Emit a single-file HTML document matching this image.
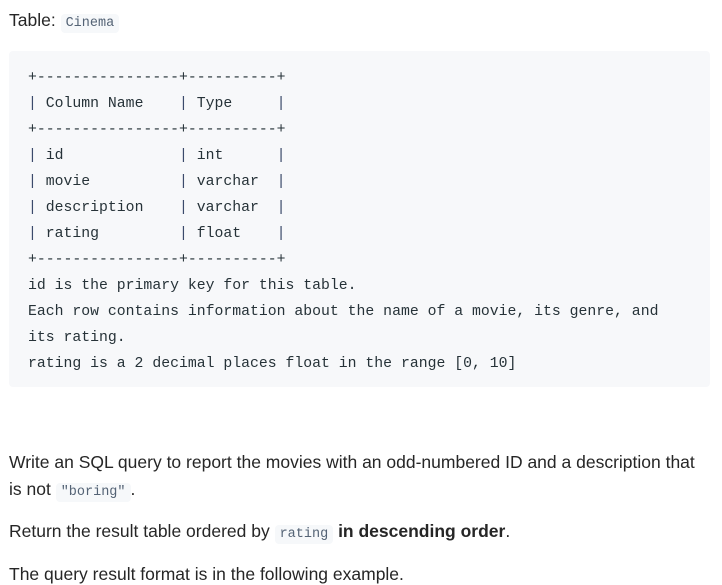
<!DOCTYPE html>
<html><head><style>
body{margin:0;background:#fff;font-family:"Liberation Sans",sans-serif;color:#262626;font-size:17.5px;width:722px;height:576px;overflow:hidden;position:relative}
.t{position:absolute;left:9px;white-space:nowrap}
code{font-family:"Liberation Mono",monospace;font-size:13.5px;background:#f6f8fa;color:#546375;padding:2px 5px;border-radius:4px}
pre{position:absolute;left:9px;top:51px;width:701px;height:336px;margin:0;background:#f7f8fa;border-radius:4px;box-sizing:border-box;padding:14px 0 0 19px;font-family:"Liberation Mono",monospace;font-size:14.8px;line-height:26px;color:#263238}
.p{color:#3b4a6b}
</style></head><body>
<div class="t" style="top:10px">Table: <code>Cinema</code></div>
<pre>+----------------+----------+
<span class="p">|</span> Column Name    <span class="p">|</span> Type     <span class="p">|</span>
+----------------+----------+
<span class="p">|</span> id             <span class="p">|</span> int      <span class="p">|</span>
<span class="p">|</span> movie          <span class="p">|</span> varchar  <span class="p">|</span>
<span class="p">|</span> description    <span class="p">|</span> varchar  <span class="p">|</span>
<span class="p">|</span> rating         <span class="p">|</span> float    <span class="p">|</span>
+----------------+----------+
id is the primary key for this table.
Each row contains information about the name of a movie, its genre, and
its rating.
rating is a 2 decimal places float in the range [0, 10]</pre>
<div class="t" style="top:449px;line-height:27px;white-space:normal;width:710px">Write an SQL query to report the movies with an odd-numbered ID and a description that<br>is not <code>"boring"</code>.</div>
<div class="t" style="top:521px">Return the result table ordered by <code>rating</code> <b>in descending order</b>.</div>
<div class="t" style="top:564px">The query result format is in the following example.</div>
</body></html>
